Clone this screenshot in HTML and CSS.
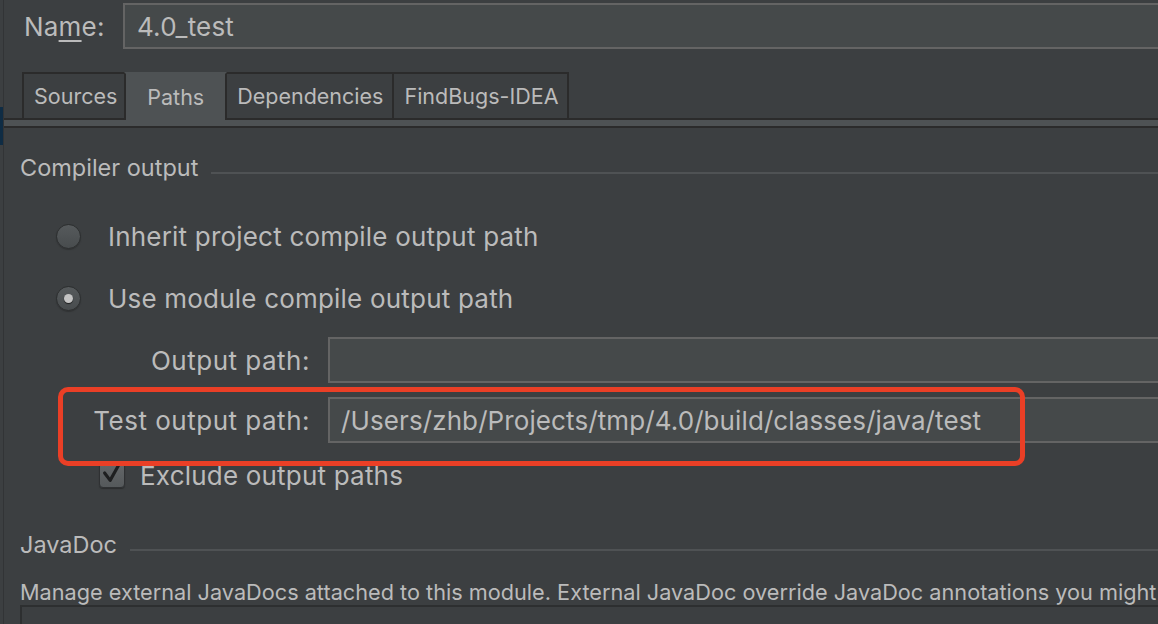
FILE: index.html
```html
<!DOCTYPE html>
<html lang="en">
<head>
    <meta charset="UTF-8">
    <title>Module settings - Paths</title>
    <link rel="stylesheet" href="styles.css">
</head>
<body>
<div class="page">
    <div class="edge"><span class="edge-mark"></span></div>

    <div class="main">
        <div class="name-row">
            <label class="name-label">Na<u>m</u>e:</label>
            <div class="field name-field">4.0_test</div>
        </div>

        <div class="tabs">
            <div class="tab">Sources</div>
            <div class="tab active">Paths</div>
            <div class="tab">Dependencies</div>
            <div class="tab">FindBugs-IDEA</div>
        </div>
        <div class="tab-strip"></div>

        <div class="panel">
            <div class="section-title">
                <span>Compiler output</span>
                <span class="rule"></span>
            </div>

            <div class="radio-row radio-first">
                <span class="radio"></span>
                <span>Inherit project compile output path</span>
            </div>
            <div class="radio-row">
                <span class="radio checked"></span>
                <span>Use module compile output path</span>
            </div>

            <div class="paths">
                <label class="path-label">Output path:</label>
                <div class="field"></div>
                <label class="path-label">Test output path:</label>
                <div class="field path-value">/Users/zhb/Projects/tmp/4.0/build/classes/java/test</div>
            </div>

            <div class="check-row">
                <span class="checkbox">
                    <svg width="26" height="30" viewBox="0 0 26 30">
                        <path d="M5 15 L11 23 L21 5" fill="none" stroke="#1e1f20" stroke-width="3.4" stroke-linecap="round" stroke-linejoin="round"/>
                    </svg>
                </span>
                <span>Exclude output paths</span>
            </div>

            <div class="section-title javadoc">
                <span>JavaDoc</span>
                <span class="rule"></span>
            </div>
            <p class="hint">Manage external JavaDocs attached to this module. External JavaDoc override JavaDoc annotations you might</p>
            <div class="doc-list"></div>
        </div>

        <div class="highlight"></div>
    </div>
</div>
</body>
</html>
```

FILE: styles.css
```css
body {
    margin: 0;
    padding: 0;
    background-color: #3c3f41;
    color: #bbbbbb;
    font-family: "Inter", "Liberation Sans", sans-serif;
    font-size: 26px;
    letter-spacing: 0.2px;
    overflow: hidden;
}
.page {
    display: flex;
    width: 1158px;
    height: 624px;
    overflow: hidden;
}
.edge {
    width: 3px;
    border-right: 1px solid #323436;
    flex: none;
}
.edge-mark {
    display: block;
    margin-top: 107px;
    height: 38px;
    background-color: #0f2c44;
}
.main {
    position: relative;
    flex: 1;
    min-width: 0;
}

/* name */
.name-row {
    display: flex;
    align-items: center;
    margin-top: 3px;
    padding-left: 20px;
}
.name-label {
    width: 99px;
}
.name-label u {
    text-underline-offset: 4px;
}
.field {
    box-sizing: border-box;
    height: 46px;
    display: flex;
    align-items: center;
    padding-left: 11px;
    background-color: #45494a;
    border: 2px solid #646464;
    border-right: none;
    white-space: nowrap;
}
.name-field {
    flex: 1;
    padding-left: 12px;
}
.path-value {
    letter-spacing: 0.1px;
}

/* tabs */
.tabs {
    display: flex;
    margin-top: 23px;
    padding-left: 18px;
    font-size: 21.5px;
    letter-spacing: 0;
}
.tab {
    box-sizing: border-box;
    height: 46px;
    display: flex;
    align-items: center;
    padding: 0 9px 0 10px;
    border: 2px solid #2b2b2b;
    border-bottom: none;
    margin-right: -2px;
}
.tab:first-child {
    padding-right: 7px;
}
.tab.active {
    position: relative;
    height: 48px;
    margin-bottom: -2px;
    padding: 0 21px;
    background-color: #4e5254;
    border-top-color: #4e5254;
}
.tab-strip {
    height: 6px;
    background-color: #4e5254;
    border-top: 2px solid #2b2b2b;
    border-bottom: 2px solid #2b2b2b;
}

/* panel */
.panel {
    padding-left: 16px;
}
.section-title {
    display: flex;
    align-items: center;
    height: 30px;
    margin-top: 24px;
    font-size: 23.5px;
    letter-spacing: 0;
}
.section-title .rule {
    flex: 1;
    height: 2px;
    margin: 12px 0 0 13px;
    background-color: #4f5254;
}
.radio-row {
    display: flex;
    align-items: center;
    height: 40px;
    margin-top: 22px;
    padding-left: 36px;
}
.radio-first {
    margin-top: 34px;
}
.radio {
    box-sizing: border-box;
    width: 25px;
    height: 25px;
    margin-right: 27px;
    border-radius: 50%;
    border: 1px solid #2c2e2f;
    background: linear-gradient(#565a5c, #484c4e);
    box-shadow: 0 1px 1px #303234;
    display: flex;
    align-items: center;
    justify-content: center;
}
.radio.checked::after {
    content: "";
    width: 9px;
    height: 9px;
    border-radius: 50%;
    background-color: #c4c4c4;
    box-shadow: 0 1px 1px #1e1f20;
}

.paths {
    display: grid;
    grid-template-columns: 217px 1fr;
    column-gap: 18px;
    row-gap: 14px;
    align-items: center;
    margin-top: 19px;
    padding-left: 73px;
}
.path-label {
    text-align: right;
    white-space: nowrap;
    letter-spacing: 0.5px;
}

.check-row {
    display: flex;
    align-items: center;
    height: 34px;
    margin-top: 15px;
    padding-left: 79px;
}
.checkbox {
    box-sizing: border-box;
    width: 26px;
    height: 26px;
    margin-right: 15px;
    border-radius: 4px;
    border: 1px solid #2f3133;
    background: linear-gradient(#646769, #55595b);
    box-shadow: 0 1px 1px #2b2d2e;
    display: flex;
    align-items: flex-end;
    justify-content: center;
}
.checkbox svg {
    display: block;
    margin-bottom: -1px;
}

.javadoc {
    margin-top: 37px;
}
.hint {
    margin: 20px 0 0;
    font-size: 21.7px;
    letter-spacing: 0;
    white-space: nowrap;
}
.doc-list {
    height: 40px;
    border: 2px solid #2d2f30;
    border-right: none;
}

/* annotation drawn on top of the screenshot */
.highlight {
    position: absolute;
    left: 54px;
    top: 387px;
    width: 957px;
    height: 69px;
    border: 5px solid #ea3f26;
    border-radius: 10px;
}
```
